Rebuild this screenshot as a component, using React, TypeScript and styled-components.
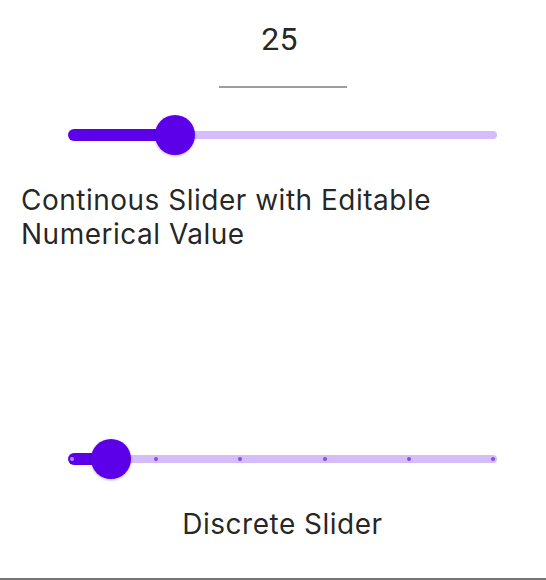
import React, { FC } from "react";
import styled, { createGlobalStyle } from "styled-components";

const GlobalStyle = createGlobalStyle`
    html, body {
        margin: 0;
        padding: 0;
        background: #ffffff;
        overflow: hidden;
    }
    body {
        font-family: Inter, Roboto, "Noto Sans", sans-serif;
        color: rgba(0, 0, 0, 0.87);
    }
`;

const Page = styled.div`
    box-sizing: border-box;
    height: 100vh;
    padding: 19px 0 0 19px;
    border-bottom: 2px solid #757575;
    display: flex;
    flex-direction: column;
`;

const NumberField = styled.div`
    align-self: center;
    box-sizing: border-box;
    width: 128px;
    padding: 0 6px 27px 0;
    border-bottom: 2px solid #9e9e9e;
    text-align: center;
    font-family: Roboto, sans-serif;
    font-size: 32px;
    line-height: 40px;
    letter-spacing: 0.3px;
`;

const SliderRoot = styled.div<{ gap: number }>`
    position: relative;
    height: 40px;
    margin: ${(props) => props.gap}px 49px 0 49px;
    display: flex;
    align-items: center;
`;

const ActiveTrack = styled.div`
    flex-shrink: 0;
    height: 12px;
    border-radius: 6px 0 0 6px;
    background: #5d00ea;
`;

const InactiveTrack = styled.div`
    flex: 1;
    height: 8px;
    border-radius: 0 4px 4px 0;
    background: #d6bdfa;
`;

const Ticks = styled.div`
    position: absolute;
    left: 2px;
    right: 2px;
    top: 18px;
    display: flex;
    justify-content: space-between;
`;

const Tick = styled.span<{ active: boolean }>`
    width: 4px;
    height: 4px;
    border-radius: 50%;
    background: ${(props) => (props.active ? "#b68af7" : "#8a48f2")};
`;

const Thumb = styled.div`
    position: absolute;
    top: 0;
    width: 40px;
    height: 40px;
    border-radius: 50%;
    background: #5d00ea;
    box-shadow: 0 1px 3px rgba(0, 0, 0, 0.28);
`;

const Label = styled.div<{ centered?: boolean; gap: number }>`
    margin-top: ${(props) => props.gap}px;
    padding: ${(props) => (props.centered ? "0" : "0 100px 0 2px")};
    align-self: ${(props) => (props.centered ? "center" : "flex-start")};
    font-size: 28px;
    line-height: 34px;
    letter-spacing: 0.5px;
`;

interface SliderProps {
    value: number;
    divisions?: number;
    gap: number;
}

const Slider: FC<SliderProps> = ({ value, divisions, gap }) => {
    const pct = value * 100;
    const ticks = divisions ? Array.from({ length: divisions + 1 }, (_, i) => i / divisions) : [];
    return (
        <SliderRoot gap={gap}>
            <ActiveTrack style={{ width: `${pct}%` }} />
            <InactiveTrack />
            {divisions ? (
                <Ticks>
                    {ticks.map((t) => (
                        <Tick key={t} active={t <= value} />
                    ))}
                </Ticks>
            ) : null}
            <Thumb style={{ left: `calc(${pct}% - 20px)` }} />
        </SliderRoot>
    );
};

const App: FC = () => {
    return (
        <>
            <GlobalStyle />
            <Page>
                <NumberField>25</NumberField>
                <Slider value={0.25} gap={27} />
                <Label gap={28}>Continous Slider with Editable Numerical Value</Label>
                <Slider value={0.1} divisions={5} gap={188} />
                <Label centered gap={28}>
                    Discrete Slider
                </Label>
            </Page>
        </>
    );
};

export default App;
